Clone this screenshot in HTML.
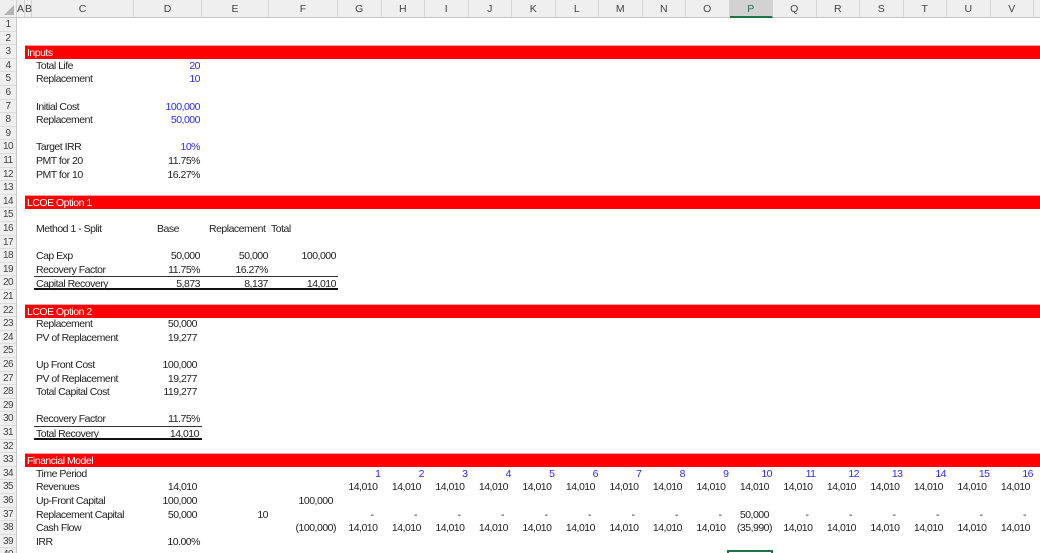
<!DOCTYPE html>
<html><head><meta charset="utf-8"><style>
*{margin:0;padding:0;box-sizing:border-box}
html,body{width:1040px;height:553px;overflow:hidden}
body{background:#fff;font-family:"Liberation Sans",Arial,sans-serif;font-size:10.5px;color:#222;position:relative;letter-spacing:-0.5px}
.hdr{position:absolute;top:0;left:0;width:1040px;height:18px;background:#efefef;border-bottom:1px solid #c6c6c6}
.h{position:absolute;top:0;height:18px;line-height:18px;text-align:center;border-right:1px solid #d4d4d4;color:#444;font-size:10.5px;letter-spacing:0}
.rn{position:absolute;left:0;width:17px;background:#efefef;border-right:1px solid #c6c6c6;top:18px;height:535px}
.n{position:absolute;left:0;width:16px;height:13.6px;line-height:14px;text-align:center;color:#444;font-size:10px;border-bottom:1px solid #dcdcdc;letter-spacing:-0.5px}
.row{position:absolute;left:0;width:1040px;height:13.6px}
.row span{position:absolute;top:0;height:13.6px;line-height:14.5px;white-space:nowrap}
.red{position:absolute;left:25px;width:1015px;height:14px;background:#ff0000;color:#fff;line-height:15px;padding-left:2px;border-top:1px solid #f4a0a0}
.L{left:36px}
.D{left:134px;width:68px;text-align:right;padding-right:2px}
.Da{left:134px;width:68px;text-align:right;padding-right:5px}
.E{left:202px;width:67px;text-align:right;padding-right:1px}
.F{left:269px;width:69px;text-align:right;padding-right:2px}
.Fa{left:269px;width:69px;text-align:right;padding-right:5px}
.b{color:#2b2bff}
.v{width:43.5px;text-align:right;padding-right:4px}
.p{width:43.5px;text-align:right;padding-right:1px;color:#2b2bff}
.d{width:43.5px;text-align:right;padding-right:8px}
</style></head><body>
<div class="hdr">
<div class="h" style="left:0;width:17px;"><svg width="17" height="18" style="position:absolute;left:0;top:0"><polygon points="14,5 14,15 4,15" fill="#b4b4b4"/></svg></div>
<div class="h" style="left:17px;width:8px">A</div>
<div class="h" style="left:25px;width:7px">B</div>
<div class="h" style="left:32px;width:102px">C</div>
<div class="h" style="left:134px;width:68px">D</div>
<div class="h" style="left:202px;width:67px">E</div>
<div class="h" style="left:269px;width:69px">F</div>
<div class="h" style="left:338px;width:43.5px">G</div>
<div class="h" style="left:381.5px;width:43.5px">H</div>
<div class="h" style="left:425px;width:43.5px">I</div>
<div class="h" style="left:468.5px;width:43.5px">J</div>
<div class="h" style="left:512px;width:43.5px">K</div>
<div class="h" style="left:555.5px;width:43.5px">L</div>
<div class="h" style="left:599px;width:43.5px">M</div>
<div class="h" style="left:642.5px;width:43.5px">N</div>
<div class="h" style="left:686px;width:43.5px">O</div>
<div class="h" style="left:729.5px;width:43.5px;background:#d2d2d2;border-bottom:2px solid #217346;color:#217346">P</div>
<div class="h" style="left:773px;width:43.5px">Q</div>
<div class="h" style="left:816.5px;width:43.5px">R</div>
<div class="h" style="left:860px;width:43.5px">S</div>
<div class="h" style="left:903.5px;width:43.5px">T</div>
<div class="h" style="left:947px;width:43.5px">U</div>
<div class="h" style="left:990.5px;width:43.5px">V</div>
<div class="h" style="left:1034px;width:43.5px">W</div>
</div>
<div class="rn">
<div class="n" style="top:0">1</div><div class="n" style="top:13.6px">2</div><div class="n" style="top:27.2px">3</div><div class="n" style="top:40.8px">4</div><div class="n" style="top:54.4px">5</div><div class="n" style="top:68px">6</div><div class="n" style="top:81.6px">7</div><div class="n" style="top:95.2px">8</div><div class="n" style="top:108.8px">9</div><div class="n" style="top:122.4px">10</div><div class="n" style="top:136px">11</div><div class="n" style="top:149.6px">12</div><div class="n" style="top:163.2px">13</div><div class="n" style="top:176.8px">14</div><div class="n" style="top:190.4px">15</div><div class="n" style="top:204px">16</div><div class="n" style="top:217.6px">17</div><div class="n" style="top:231.2px">18</div><div class="n" style="top:244.8px">19</div><div class="n" style="top:258.4px">20</div><div class="n" style="top:272px">21</div><div class="n" style="top:285.6px">22</div><div class="n" style="top:299.2px">23</div><div class="n" style="top:312.8px">24</div><div class="n" style="top:326.4px">25</div><div class="n" style="top:340px">26</div><div class="n" style="top:353.6px">27</div><div class="n" style="top:367.2px">28</div><div class="n" style="top:380.8px">29</div><div class="n" style="top:394.4px">30</div><div class="n" style="top:408px">31</div><div class="n" style="top:421.6px">32</div><div class="n" style="top:435.2px">33</div><div class="n" style="top:448.8px">34</div><div class="n" style="top:462.4px">35</div><div class="n" style="top:476px">36</div><div class="n" style="top:489.6px">37</div><div class="n" style="top:503.2px">38</div><div class="n" style="top:516.8px">39</div><div class="n" style="top:530.4px">40</div>
</div>

<div class="red" style="top:45.2px">Inputs</div>
<div class="row" style="top:58.8px"><span class="L">Total Life</span><span class="D b">20</span></div>
<div class="row" style="top:72.4px"><span class="L">Replacement</span><span class="D b">10</span></div>
<div class="row" style="top:99.6px"><span class="L">Initial Cost</span><span class="D b">100,000</span></div>
<div class="row" style="top:113.2px"><span class="L">Replacement</span><span class="D b">50,000</span></div>
<div class="row" style="top:140.4px"><span class="L">Target IRR</span><span class="D b">10%</span></div>
<div class="row" style="top:154px"><span class="L">PMT for 20</span><span class="D">11.75%</span></div>
<div class="row" style="top:167.6px"><span class="L">PMT for 10</span><span class="D">16.27%</span></div>

<div class="red" style="top:194.8px">LCOE Option 1</div>
<div class="row" style="top:222px"><span class="L">Method 1 - Split</span><span style="left:157px">Base</span><span style="left:209px">Replacement</span><span style="left:271px">Total</span></div>
<div class="row" style="top:249.2px"><span class="L">Cap Exp</span><span class="D">50,000</span><span class="E">50,000</span><span class="F">100,000</span></div>
<div class="row" style="top:262.8px"><span class="L">Recovery Factor</span><span class="D">11.75%</span><span class="E">16.27%</span></div>
<div class="row" style="top:276.4px;border-top:1px solid #333;left:34px;width:304px;border-bottom:2px solid #111"><span style="left:2px">Capital Recovery</span><span style="left:100px;width:66px;text-align:right">5,873</span><span style="left:168px;width:67px;text-align:right;padding-right:1px">8,137</span><span style="left:235px;width:69px;text-align:right;padding-right:2px">14,010</span></div>

<div class="red" style="top:303.6px">LCOE Option 2</div>
<div class="row" style="top:317.2px"><span class="L">Replacement</span><span class="Da">50,000</span></div>
<div class="row" style="top:330.8px"><span class="L">PV of Replacement</span><span class="Da">19,277</span></div>
<div class="row" style="top:358px"><span class="L">Up Front Cost</span><span class="Da">100,000</span></div>
<div class="row" style="top:371.6px"><span class="L">PV of Replacement</span><span class="Da">19,277</span></div>
<div class="row" style="top:385.2px"><span class="L">Total Capital Cost</span><span class="Da">119,277</span></div>
<div class="row" style="top:412.4px"><span class="L">Recovery Factor</span><span class="D">11.75%</span></div>
<div class="row" style="top:426px;border-top:1px solid #333;left:34px;width:168px;border-bottom:2px solid #111"><span style="left:2px">Total Recovery</span><span style="left:100px;width:68px;text-align:right;padding-right:3px">14,010</span></div>

<div class="red" style="top:453.2px">Financial Model</div>
<div class="row" style="top:466.8px"><span class="L">Time Period</span>
<span class="p" style="left:338px">1</span><span class="p" style="left:381.5px">2</span><span class="p" style="left:425px">3</span><span class="p" style="left:468.5px">4</span><span class="p" style="left:512px">5</span><span class="p" style="left:555.5px">6</span><span class="p" style="left:599px">7</span><span class="p" style="left:642.5px">8</span><span class="p" style="left:686px">9</span><span class="p" style="left:729.5px">10</span><span class="p" style="left:773px">11</span><span class="p" style="left:816.5px">12</span><span class="p" style="left:860px">13</span><span class="p" style="left:903.5px">14</span><span class="p" style="left:947px">15</span><span class="p" style="left:990.5px">16</span></div>
<div class="row" style="top:480.4px"><span class="L">Revenues</span><span class="Da">14,010</span>
<span class="v" style="left:338px">14,010</span><span class="v" style="left:381.5px">14,010</span><span class="v" style="left:425px">14,010</span><span class="v" style="left:468.5px">14,010</span><span class="v" style="left:512px">14,010</span><span class="v" style="left:555.5px">14,010</span><span class="v" style="left:599px">14,010</span><span class="v" style="left:642.5px">14,010</span><span class="v" style="left:686px">14,010</span><span class="v" style="left:729.5px">14,010</span><span class="v" style="left:773px">14,010</span><span class="v" style="left:816.5px">14,010</span><span class="v" style="left:860px">14,010</span><span class="v" style="left:903.5px">14,010</span><span class="v" style="left:947px">14,010</span><span class="v" style="left:990.5px">14,010</span></div>
<div class="row" style="top:494px"><span class="L">Up-Front Capital</span><span class="Da">100,000</span><span class="Fa">100,000</span></div>
<div class="row" style="top:507.6px"><span class="L">Replacement Capital</span><span class="Da">50,000</span><span class="E">10</span>
<span class="d" style="left:338px">-</span><span class="d" style="left:381.5px">-</span><span class="d" style="left:425px">-</span><span class="d" style="left:468.5px">-</span><span class="d" style="left:512px">-</span><span class="d" style="left:555.5px">-</span><span class="d" style="left:599px">-</span><span class="d" style="left:642.5px">-</span><span class="d" style="left:686px">-</span><span class="v" style="left:729.5px">50,000</span><span class="d" style="left:773px">-</span><span class="d" style="left:816.5px">-</span><span class="d" style="left:860px">-</span><span class="d" style="left:903.5px">-</span><span class="d" style="left:947px">-</span><span class="d" style="left:990.5px">-</span></div>
<div class="row" style="top:521.2px"><span class="L">Cash Flow</span><span class="F">(100,000)</span>
<span class="v" style="left:338px">14,010</span><span class="v" style="left:381.5px">14,010</span><span class="v" style="left:425px">14,010</span><span class="v" style="left:468.5px">14,010</span><span class="v" style="left:512px">14,010</span><span class="v" style="left:555.5px">14,010</span><span class="v" style="left:599px">14,010</span><span class="v" style="left:642.5px">14,010</span><span class="v" style="left:686px">14,010</span><span class="v" style="left:729.5px;padding-right:1px">(35,990)</span><span class="v" style="left:773px">14,010</span><span class="v" style="left:816.5px">14,010</span><span class="v" style="left:860px">14,010</span><span class="v" style="left:903.5px">14,010</span><span class="v" style="left:947px">14,010</span><span class="v" style="left:990.5px">14,010</span></div>
<div class="row" style="top:534.8px"><span class="L">IRR</span><span class="D">10.00%</span></div>
<div style="position:absolute;left:727px;top:550px;width:46px;height:8px;border:2px solid #217346"></div>
</body></html>
